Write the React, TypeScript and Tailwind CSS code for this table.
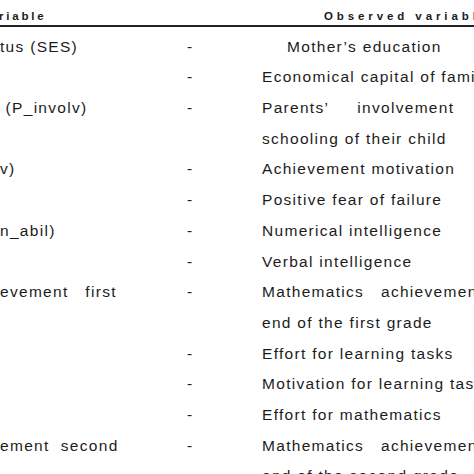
import React from "react";

type Row = { left?: string; dash?: boolean; right: string; rightClass?: string };

const rows: Row[] = [
  { left: "tus (SES)", dash: true, right: "Mother\u2019s education", rightClass: "pl-[25px]" },
  { dash: true, right: "Economical capital of family" },
  { left: "\u00a0(P_involv)", dash: true, right: "Parents\u2019\u00a0\u00a0\u00a0\u00a0 involvement\u00a0\u00a0\u00a0 in" },
  { right: "schooling of their child" },
  { left: "v)", dash: true, right: "Achievement motivation" },
  { dash: true, right: "Positive fear of failure" },
  { left: "n_abil)", dash: true, right: "Numerical intelligence" },
  { dash: true, right: "Verbal intelligence" },
  { left: "evement\u00a0\u00a0 first", dash: true, right: "Mathematics\u00a0\u00a0 achievement at" },
  { right: "end of the first grade" },
  { dash: true, right: "Effort for learning tasks" },
  { dash: true, right: "Motivation for learning tasks" },
  { dash: true, right: "Effort for mathematics" },
  { left: "ement\u00a0 second", dash: true, right: "Mathematics\u00a0\u00a0 achievement at" },
  { right: "end of the second grade" },
];

export default function App() {
  return (
    <div
      className="w-[474px] h-[474px] overflow-hidden bg-white text-[#1c1c1c]"
      style={{ fontFamily: '"Liberation Sans", Arial, sans-serif' }}
    >
      <div className="w-[474px]">
        <div className="flex h-[25px] items-end pb-[3px] text-[11.5px] font-bold leading-none">
          <div className="w-[325px] shrink-0 tracking-[2.8px] -ml-[1px]">riable</div>
          <div className="shrink-0 whitespace-nowrap tracking-[3.9px]">Observed variables</div>
        </div>
        <div className="h-[2px] bg-[#222]" />
        <div className="pt-[4px] text-[15.5px] tracking-[1.3px]">
          {rows.map((r, i) => (
            <div key={i} className="flex h-[30.7px] items-center whitespace-nowrap">
              <div className="w-[187px] shrink-0">{r.left ?? ""}</div>
              <div className="w-[75px] shrink-0">{r.dash ? "-" : ""}</div>
              <div className={"shrink-0 " + (r.rightClass ?? "")}>{r.right}</div>
            </div>
          ))}
        </div>
      </div>
    </div>
  );
}
